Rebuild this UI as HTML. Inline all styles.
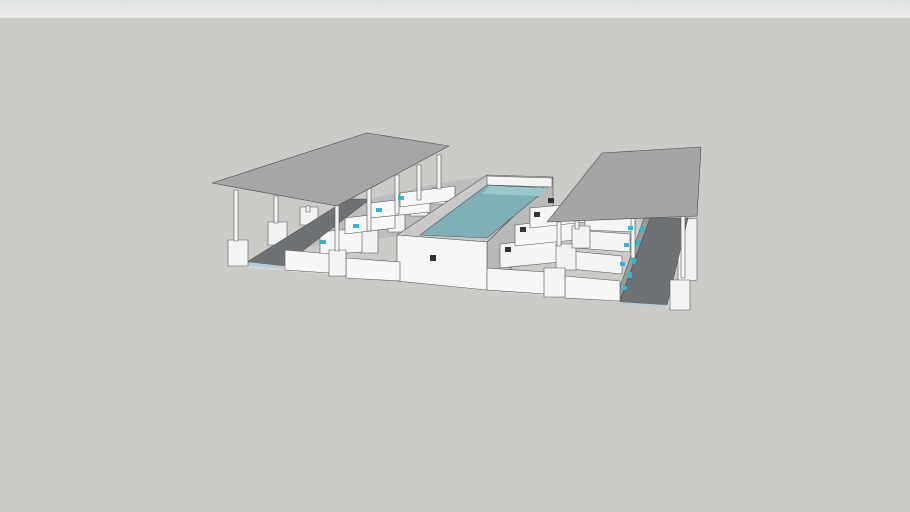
<!DOCTYPE html>
<html><head><meta charset="utf-8"><style>
html,body{margin:0;padding:0;width:910px;height:512px;overflow:hidden;background:#cbcbc8}
.bar{position:absolute;left:0;top:0;width:910px;height:17px;background:linear-gradient(#dfe2e3,#ececec);border-bottom:1px solid #e4e4e4}
svg{position:absolute;left:0;top:0}
</style></head><body>
<div class="bar"></div>
<svg width="910" height="512" viewBox="0 0 910 512">
<g stroke="#555" stroke-width="0.6" stroke-linejoin="round">
<polygon points="228,266 400,281 487,291 620,302 690,310 690,300 400,272 228,258" fill="#d6d6d4" stroke="none"/>
<polygon points="283,250 398,236 487,176 430,185 345,205" fill="#bdbdbd" stroke="none"/>
<polygon points="300,207 318,207 318,225 300,225" fill="#f2f2f2"/>
<polygon points="268,222 287,222 287,245 268,245" fill="#f2f2f2"/>
<polygon points="410,199 428,199 428,216 410,216" fill="#f2f2f2"/>
<polygon points="432,188 446,188 446,204 432,204" fill="#f2f2f2"/>
<polygon points="388,213 405,213 405,232 388,232" fill="#f2f2f2"/>
<polygon points="360,230 378,230 378,253 360,253" fill="#f2f2f2"/>
<polygon points="320,232 362,228 362,252 320,255" fill="#f7f7f7"/>
<polygon points="345,218 395,212 395,228 345,234" fill="#f7f7f7"/>
<polygon points="370,203 430,196 430,212 370,218" fill="#f7f7f7"/>
<polygon points="400,193 455,186 455,200 400,207" fill="#f7f7f7"/>
<polygon points="247,262 283,266 370,199 348,199" fill="#6f7275"/>
<polygon points="247,262 283,266 283,269 247,266" fill="#b8cbd6" stroke="none"/>
<polygon points="487,242 553,178 553,230 487,290" fill="#b9b9b9"/>
<polygon points="500,244 560,238 560,262 500,268" fill="#f5f5f5"/>
<polygon points="515,225 575,218 575,240 515,246" fill="#f5f5f5"/>
<polygon points="530,208 585,203 585,222 530,228" fill="#f5f5f5"/>
<polygon points="560,250 622,256 622,274 560,268" fill="#f5f5f5"/>
<polygon points="575,230 630,234 630,252 575,248" fill="#f5f5f5"/>
<polygon points="585,212 635,215 635,232 585,230" fill="#f5f5f5"/>
<polygon points="556,244 576,244 576,270 556,270" fill="#f2f2f2"/>
<polygon points="572,226 590,226 590,248 572,248" fill="#f2f2f2"/>
<polygon points="678,220 697,218 697,280 678,282" fill="#f2f2f2"/>
<polygon points="620,302 667,305 688,218 650,218" fill="#6f7275"/>
<polygon points="620,302 667,305 667,307 620,304" fill="#b8cbd6" stroke="none"/>
<polygon points="620,300 650,218 644,218 616,298" fill="#9a9a9a"/>
<polygon points="397,235 487,175 553,177 487,242" fill="#c9c9c9"/>
<polygon points="487,176 552,178 552,187 487,185" fill="#f4f4f4"/>
<polygon points="420,235 487,185 548,188 487,238" fill="#7fb0b5"/>
<polygon points="490,186 548,188 540,196 482,194" fill="#99c8cc" stroke="none"/>
<polygon points="397,235 487,242 487,290 397,281" fill="#f6f6f6"/>
<polygon points="285,250 330,254 330,273 285,270" fill="#f7f7f7"/>
<polygon points="346,258 400,262 400,281 346,278" fill="#f7f7f7"/>
<polygon points="329,250 346,250 346,276 329,276" fill="#f4f4f4"/>
<polygon points="228,240 248,240 248,266 228,266" fill="#f4f4f4"/>
<polygon points="487,268 545,272 545,294 487,290" fill="#f7f7f7"/>
<polygon points="565,276 620,281 620,301 565,298" fill="#f7f7f7"/>
<polygon points="544,268 565,268 565,297 544,297" fill="#f4f4f4"/>
<polygon points="670,280 690,280 690,310 670,310" fill="#f4f4f4"/>
<g fill="#f4f4f4">
<rect x="234" y="190" width="4" height="51"/>
<rect x="274" y="196" width="4" height="27"/>
<rect x="335" y="202" width="4" height="49"/>
<rect x="367" y="188" width="4" height="43"/>
<rect x="395" y="175" width="4" height="39"/>
<rect x="417" y="165" width="4" height="35"/>
<rect x="437" y="155" width="4" height="34"/>
<rect x="306" y="206" width="4" height="6"/>
<rect x="557" y="222" width="4" height="24"/>
<rect x="575" y="221" width="4" height="8"/>
<rect x="631" y="216" width="4" height="42"/>
<rect x="681" y="216" width="4" height="62"/>
</g>
<polygon points="212,183 367,133 449,146 337,206" fill="#a6a6a6" stroke="#444"/>
<polygon points="602,153 701,147 697,216 547,222" fill="#a5a5a5" stroke="#444"/>
</g>
<g fill="#2bb8d0">
<rect x="320" y="240" width="6" height="4"/><rect x="376" y="208" width="6" height="4"/>
<rect x="398" y="196" width="6" height="4"/><rect x="353" y="224" width="6" height="4"/>
<rect x="628" y="226" width="5" height="4"/><rect x="624" y="243" width="5" height="4"/>
<rect x="620" y="262" width="5" height="4"/><rect x="622" y="286" width="5" height="4"/>
<rect x="640" y="226" width="4" height="6"/><rect x="636" y="240" width="4" height="6"/>
<rect x="632" y="258" width="4" height="6"/><rect x="628" y="272" width="4" height="6"/>
</g>
<g fill="#333">
<rect x="430" y="255" width="6" height="6"/>
<rect x="505" y="247" width="6" height="5"/><rect x="520" y="227" width="6" height="5"/>
<rect x="534" y="212" width="6" height="5"/><rect x="548" y="198" width="6" height="5"/>
</g>
</svg>
</body></html>
